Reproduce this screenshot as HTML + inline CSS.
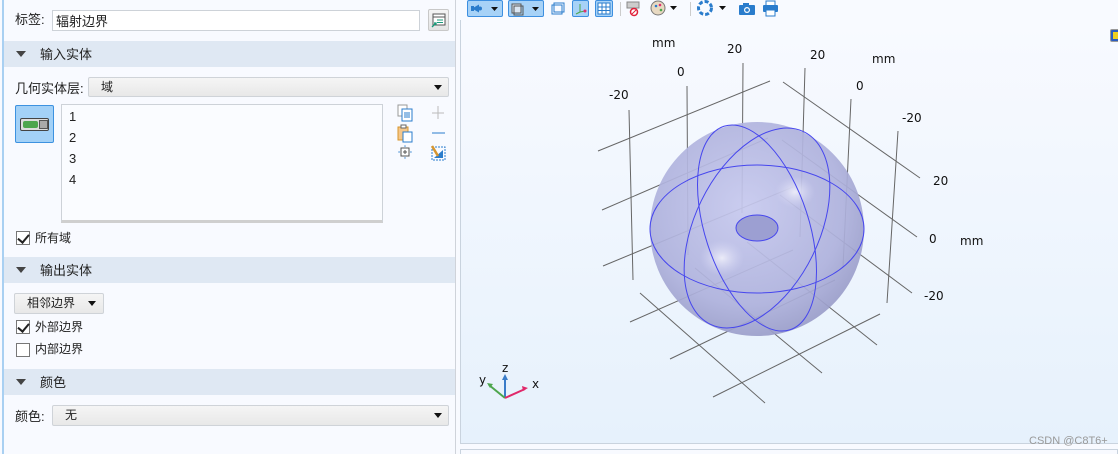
<!DOCTYPE html>
<html><head><meta charset="utf-8"><style>
*{margin:0;padding:0;box-sizing:border-box}
body{width:1118px;height:454px;overflow:hidden;background:#f8faff;font-family:"Liberation Sans","Noto Sans CJK SC",sans-serif;font-size:12px;color:#222;position:relative}
.a{position:absolute}
.hdr{position:absolute;left:4px;width:451px;height:26px;background:#dfe8f3;font-size:13px}
.hdr span{position:absolute;left:36px;top:3px}
.hdr i{position:absolute;left:12px;top:10px;border-left:5px solid transparent;border-right:5px solid transparent;border-top:6px solid #444}
.combo{position:absolute;height:20px;border:1px solid #cfd3d8;border-radius:2px;background:linear-gradient(#f5f5f5,#e8e8e8)}
.combo span{position:absolute;left:12px;top:0px}
.combo i{position:absolute;right:6px;top:7px;border-left:4px solid transparent;border-right:4px solid transparent;border-top:5px solid #111}
.cb{position:absolute;width:14px;height:14px;border:1px solid #777;background:#fff}
.cb.on::after{content:"";position:absolute;left:3px;top:0px;width:5px;height:9px;border-right:2px solid #222;border-bottom:2px solid #222;transform:rotate(40deg)}
.tb{position:absolute;top:0;height:17px;background:#a7d2f7;border:1px solid #3d8fe0;border-radius:2px}
.t{font-family:"DejaVu Sans",sans-serif;font-size:12px;fill:#111}
</style></head><body>
<div class="a" style="left:2px;top:0;width:2px;height:454px;background:#a9d0f2"></div>
<div class="a" style="left:455px;top:0;width:1px;height:454px;background:#cfd3da"></div>

<div class="a" style="left:15px;top:9px;font-size:13px">标签:</div>
<div class="a" style="left:52px;top:10px;width:368px;height:21px;border:1px solid #cdd2d8;background:#fff"><span class="a" style="left:3px;top:0px;font-size:13px">辐射边界</span></div>
<div class="a" style="left:428px;top:9px;width:21px;height:22px;border:1px solid #c8c8c8;border-radius:2px;background:linear-gradient(#f4f4f4,#e4e4e4)">
<svg width="19" height="20" viewBox="0 0 19 20"><rect x="4" y="4" width="12" height="11" fill="#fff" stroke="#555"/><line x1="4" y1="7" x2="16" y2="7" stroke="#555"/><line x1="8" y1="10" x2="14" y2="10" stroke="#1a9a7a"/><line x1="8" y1="12.5" x2="14" y2="12.5" stroke="#1a9a7a"/><path d="M3 17 L7 13 M5 13 H7 V15" stroke="#1a9a7a" fill="none" stroke-width="1.3"/></svg></div>

<div class="hdr" style="top:41px"><i></i><span>输入实体</span></div>
<div class="a" style="left:15px;top:78px;font-size:13px">几何实体层:</div>
<div class="combo" style="left:88px;top:77px;width:361px"><span>域</span><i></i></div>

<div class="a" style="left:15px;top:105px;width:39px;height:38px;background:#a3d1f7;border:1px solid #3d92e0;border-radius:2px">
<div class="a" style="left:4px;top:12px;width:29px;height:13px;border:1px solid #444;border-radius:2px;background:#ddd"></div>
<div class="a" style="left:7px;top:15px;width:15px;height:7px;background:#4da64d;border-radius:2px"></div>
<div class="a" style="left:23px;top:14px;width:9px;height:9px;background:#aaa;border:1px solid #555"></div></div>
<div class="a" style="left:61px;top:104px;width:322px;height:119px;border:1px solid #cdd2d8;border-bottom:3px solid #cfcfcf;background:#fafcff;font-size:13px;line-height:21px;padding:1px 0 0 7px">1<br>2<br>3<br>4</div>
<svg class="a" style="left:396px;top:104px" width="54" height="62">
<rect x="2" y="1" width="9" height="11" fill="#fff" stroke="#999"/><rect x="6" y="5" width="10" height="12" fill="#fff" stroke="#2a7ccc"/><path d="M8 9h6M8 11h6M8 13h6" stroke="#2a7ccc"/>
<line x1="42" y1="2" x2="42" y2="15" stroke="#bbb"/><line x1="36" y1="9" x2="48" y2="9" stroke="#bbb"/>
<rect x="2" y="23" width="10" height="13" fill="#f5c78a" stroke="#d7952e"/><rect x="5" y="21" width="5" height="3" fill="#fff" stroke="#666"/><rect x="7" y="28" width="9" height="10" fill="#fff" stroke="#2a7ccc"/>
<line x1="36" y1="29" x2="49" y2="29" stroke="#2a7ccc"/>
<rect x="5" y="44" width="8" height="8" fill="#fff" stroke="#555"/><path d="M9 46v4M7 48h4" stroke="#555"/><path d="M9 41l-1 1.5h2zM9 55l-1-1.5h2zM2 48l1.5-1v2zM16 48l-1.5-1v2z" fill="#2a7ccc"/>
<rect x="36" y="43" width="13" height="13" fill="none" stroke="#2a7ccc" stroke-dasharray="2 1"/><path d="M38 54l9-8v8z" fill="#2a7ccc"/><path d="M36 42l6 10" stroke="#d7952e" stroke-width="2.5"/>
</svg>
<div class="cb on" style="left:16px;top:231px"></div><div class="a" style="left:35px;top:229px;font-size:12px">所有域</div>

<div class="hdr" style="top:257px"><i></i><span>输出实体</span></div>
<div class="combo" style="left:14px;top:293px;width:90px;height:21px"><span>相邻边界</span><i style="right:7px"></i></div>
<div class="cb on" style="left:16px;top:320px"></div><div class="a" style="left:35px;top:318px">外部边界</div>
<div class="cb" style="left:16px;top:343px"></div><div class="a" style="left:35px;top:340px">内部边界</div>

<div class="hdr" style="top:369px"><i></i><span>颜色</span></div>
<div class="a" style="left:15px;top:406px;font-size:13px">颜色:</div>
<div class="combo" style="left:52px;top:405px;width:397px;height:21px"><span>无</span><i></i></div>

<!-- toolbar -->
<div class="tb" style="left:467px;width:36px"><svg width="34" height="15"><path d="M4 7.5L11 3.5v8z M3 5h3v5H3z" fill="#2a7ccc"/><circle cx="12" cy="7.5" r="2" fill="#2a7ccc"/><path d="M23 6h7l-3.5 4z" fill="#111"/></svg></div>
<div class="tb" style="left:508px;width:36px"><svg width="34" height="15"><rect x="3" y="3" width="9" height="9" fill="#dbe6f2" stroke="#555"/><rect x="5" y="5" width="9" height="9" fill="none" stroke="#555"/><path d="M23 6h7l-3.5 4z" fill="#111"/></svg></div>
<svg class="a" style="left:550px;top:1px" width="16" height="15"><rect x="2" y="4" width="10" height="9" fill="none" stroke="#2a7ccc"/><rect x="4" y="2" width="10" height="9" fill="none" stroke="#2a7ccc"/></svg>
<div class="tb" style="left:572px;width:17px"><svg width="15" height="15"><path d="M7 3v8M7 11l-4 2M7 11l5-1" stroke="#4da64d" fill="none"/><circle cx="12" cy="10" r="1.5" fill="#e03070"/></svg></div>
<div class="tb" style="left:595px;width:18px"><svg width="16" height="15"><rect x="2" y="2" width="12" height="11" fill="#fff" stroke="#2a7ccc"/><path d="M6 2v11M10 2v11M2 6h12M2 9.5h12" stroke="#2a7ccc"/></svg></div>
<div class="a" style="left:620px;top:2px;width:1px;height:14px;background:#ccc"></div>
<svg class="a" style="left:625px;top:0" width="17" height="18"><rect x="2" y="2" width="12" height="6" fill="#ccc" stroke="#888"/><circle cx="9" cy="12" r="3.5" fill="#fff" stroke="#e0203a" stroke-width="1.5"/><line x1="7" y1="14" x2="11" y2="10" stroke="#e0203a"/></svg>
<svg class="a" style="left:650px;top:0" width="30" height="18"><ellipse cx="8" cy="8" rx="7" ry="7" fill="#e8d9c2" stroke="#777"/><circle cx="6" cy="6" r="1.3" fill="#2a7ccc"/><circle cx="10" cy="5" r="1.3" fill="#e03070"/><circle cx="11" cy="10" r="1.3" fill="#4da64d"/><path d="M20 6h7l-3.5 4z" fill="#111"/></svg>
<div class="a" style="left:690px;top:2px;width:1px;height:14px;background:#ccc"></div>
<svg class="a" style="left:697px;top:0" width="32" height="18"><circle cx="8" cy="8" r="6.5" fill="none" stroke="#2a7ccc" stroke-width="3" stroke-dasharray="4 2"/><path d="M22 6h7l-3.5 4z" fill="#111"/></svg>
<svg class="a" style="left:738px;top:1px" width="18" height="15"><rect x="1" y="4" width="16" height="10" rx="1" fill="#2a7ccc"/><rect x="5" y="2" width="6" height="3" fill="#2a7ccc"/><circle cx="9" cy="9" r="3" fill="#fff"/><circle cx="9" cy="9" r="1.8" fill="#2a7ccc"/></svg>
<svg class="a" style="left:762px;top:0" width="17" height="17"><rect x="4" y="1" width="9" height="5" fill="#fff" stroke="#2a7ccc"/><rect x="1" y="5" width="15" height="7" rx="1" fill="#2a7ccc"/><rect x="4" y="10" width="9" height="6" fill="#fff" stroke="#2a7ccc"/></svg>

<!-- graphics -->
<div class="a" style="left:460px;top:20px;width:658px;height:424px;background:linear-gradient(#f8faff,#e6f1fc);border-left:1px solid #c9d3de;border-bottom:1px solid #c9d3de"></div>
<div class="a" style="left:460px;top:449px;width:658px;height:5px;border:1px solid #c9d3de;border-bottom:none;background:#f8faff"></div>
<div class="a" style="left:1110px;top:29px;width:10px;height:13px;background:#2a5cc0;border:1px solid #999;border-radius:2px"><div class="a" style="left:2px;top:2px;width:6px;height:7px;background:#f0d020"></div></div>

<svg class="a" style="left:0;top:0" width="1118" height="454">
<defs>
<radialGradient id="sp" cx="0.45" cy="0.4" r="0.65">
<stop offset="0" stop-color="#c7c9ee"/><stop offset="0.7" stop-color="#aeb1dc"/><stop offset="1" stop-color="#9598c4"/></radialGradient>
<radialGradient id="hl" cx="0.5" cy="0.5" r="0.5"><stop offset="0" stop-color="#f0f0fa" stop-opacity="0.9"/><stop offset="1" stop-color="#d5d6f5" stop-opacity="0"/></radialGradient>
</defs>
<g stroke="#666" stroke-width="1" fill="none">
<path d="M629 110L633 280M687 86L688 255M743 63L742 213M805 68L800 237M851 99L843 267M898 131L887 303"/>
<path d="M598 151L770 81M602 210L768 138M603 266L793 187M630 322L793 250M670 359L835 280M713 397L880 314"/>
<path d="M783 82L920 178M782 140L917 237M780 195L912 293M747 242L877 345M695 268L822 373M640 293L765 403"/>
</g>
<circle cx="757" cy="229" r="107" fill="url(#sp)" opacity="0.92"/>
<ellipse cx="722" cy="258" rx="22" ry="18" fill="url(#hl)"/>
<ellipse cx="795" cy="192" rx="20" ry="16" fill="url(#hl)"/>
<g stroke="#4646ee" stroke-width="1" fill="none">
<ellipse cx="757" cy="229" rx="107" ry="64"/>
<ellipse cx="757" cy="228" rx="21" ry="13" fill="#9c9fd2"/>
<ellipse cx="757" cy="228" rx="107" ry="52" transform="rotate(72 757 228)"/>
<ellipse cx="757" cy="228" rx="107" ry="62" transform="rotate(-64 757 228)"/>
</g>
<text class="t" x="652" y="47">mm</text><text class="t" x="727" y="53">20</text><text class="t" x="810" y="59">20</text><text class="t" x="872" y="63">mm</text>
<text class="t" x="677" y="76">0</text><text class="t" x="856" y="90">0</text><text class="t" x="609" y="99">-20</text><text class="t" x="902" y="122">-20</text>
<text class="t" x="933" y="185">20</text><text class="t" x="929" y="243">0</text><text class="t" x="960" y="245">mm</text><text class="t" x="924" y="300">-20</text>
<g stroke-width="2" fill="none"><path d="M505 398V378" stroke="#3a7cc8"/><path d="M505 398L489 385" stroke="#4da64d"/><path d="M505 398L525 389" stroke="#e0286a"/></g>
<path d="M505 374l-3 6h6z" fill="#3a7cc8"/><path d="M487 383l6 1-3 4z" fill="#4da64d"/><path d="M528 388l-6-2 1 5z" fill="#e0286a"/>
<text class="t" x="502" y="372">z</text><text class="t" x="479" y="384">y</text><text class="t" x="532" y="388">x</text>
<text x="1029" y="444" style="font-size:11px;fill:#999;font-family:'Liberation Sans',sans-serif">CSDN @C8T6+</text>
</svg>
</body></html>
